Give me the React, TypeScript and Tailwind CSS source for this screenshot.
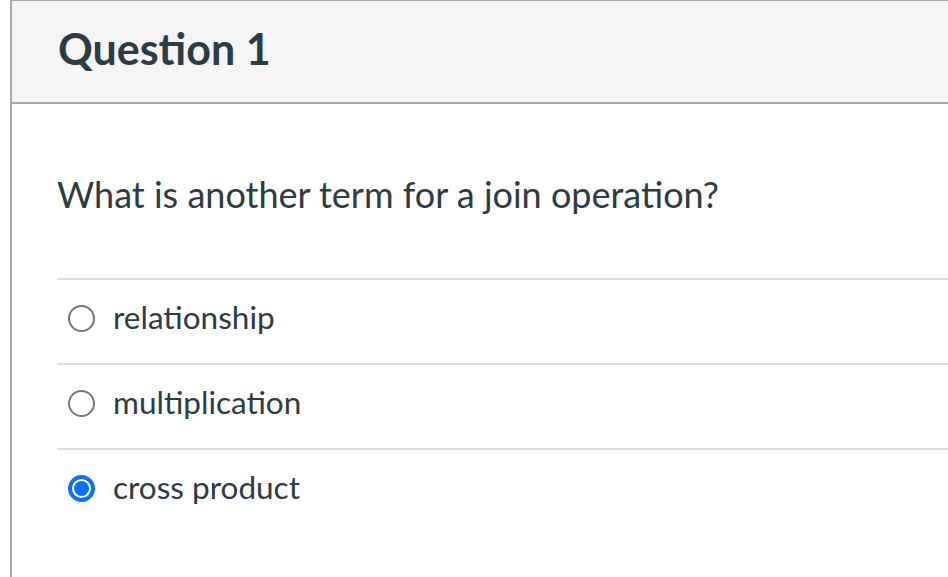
const options = [
  { label: "relationship", checked: false },
  { label: "multiplication", checked: false },
  { label: "cross product", checked: true },
];

function Radio({ checked }: { checked: boolean }) {
  if (checked) {
    return (
      <span className="flex h-[27px] w-[27px] shrink-0 items-center justify-center rounded-full border-[4px] border-[#0a72ff] bg-white">
        <span className="h-[15px] w-[15px] rounded-full bg-[#0a72ff]" />
      </span>
    );
  }
  return <span className="h-[27px] w-[27px] shrink-0 rounded-full border-2 border-[#767676] bg-white" />;
}

export default function App() {
  return (
    <div className="h-[577px] w-[948px] overflow-hidden bg-white" style={{ fontFamily: "Lato, 'Noto Sans', sans-serif" }}>
      <div className="ml-[10px] h-full border-l-2 border-t border-[#a9a9a9] text-[#2d3b45]">
        <div className="flex h-[103px] items-center border-b-2 border-[#a9a9a9] bg-[#f5f5f5] pb-[6px] pl-[46px]">
          <h2 className="text-[43px] font-bold leading-none">Question 1</h2>
        </div>
        <div className="pl-[45px]">
          <p className="pt-[66px] pb-[60px] text-[36px] leading-[48px]">What is another term for a join operation?</p>
          {options.map((o) => (
            <label key={o.label} className="flex h-[85px] items-center gap-[18px] border-t-2 border-[#dddddd] pb-[7px] pl-[11px] text-[31.5px]">
              <Radio checked={o.checked} />
              <span>{o.label}</span>
            </label>
          ))}
        </div>
      </div>
    </div>
  );
}
